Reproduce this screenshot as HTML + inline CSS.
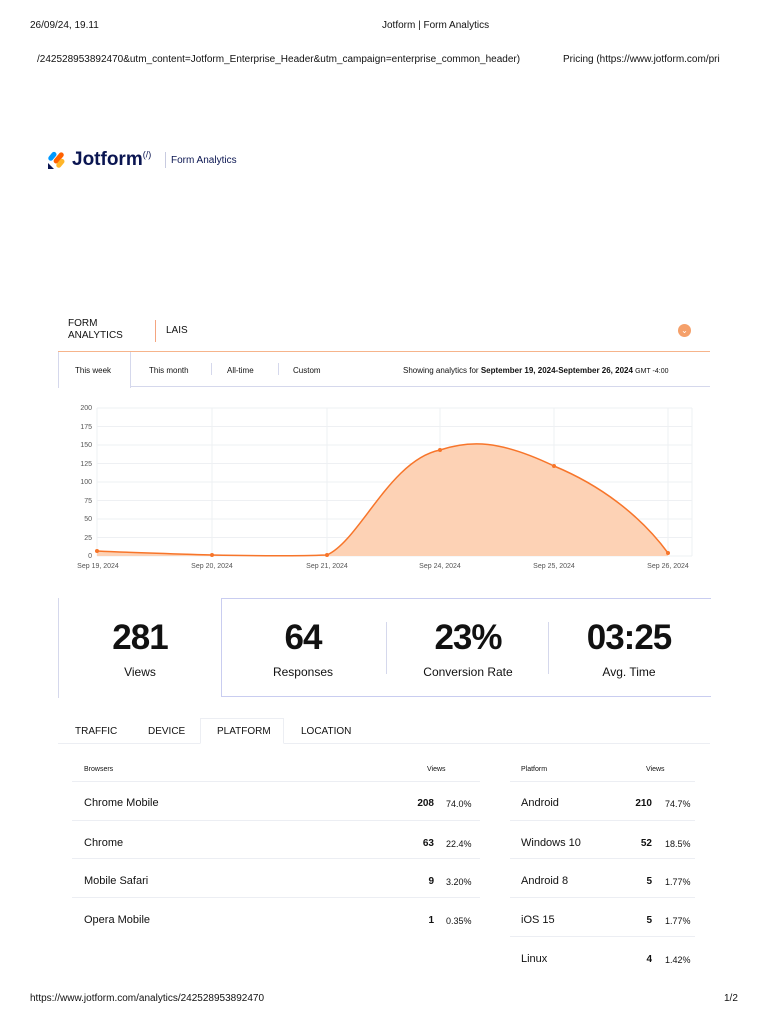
<!DOCTYPE html>
<html><head><meta charset="utf-8"><style>
*{margin:0;padding:0;box-sizing:border-box}
body{width:768px;height:1024px;background:#fff;font-family:"Liberation Sans",sans-serif;color:#111;position:relative;overflow:hidden}
.a{position:absolute;white-space:nowrap}
.s{font-size:10px}
.big{font-size:35px;font-weight:bold;letter-spacing:-1px;text-align:center;width:160px}
.lbl{font-size:12px;text-align:center;width:160px}
.row{position:absolute;border-top:1px solid #eceef3;height:1px}
</style></head><body>
<div class="a s" style="left:30px;top:20px">26/09/24, 19.11</div>
<div class="a s" style="left:382px;top:20px">Jotform | Form Analytics</div>
<div class="a s" style="left:37px;top:54px">/242528953892470&amp;utm_content=Jotform_Enterprise_Header&amp;utm_campaign=enterprise_common_header)</div>
<div class="a s" style="left:563px;top:54px">Pricing (https://www.jotform.com/pri</div>

<svg class="a" style="left:47px;top:150px" width="20" height="20" viewBox="0 0 20 20">
<rect x="3" y="1" width="5" height="10" rx="2.5" transform="rotate(40 5 6)" fill="#0099ff"/>
<rect x="9" y="1" width="5" height="13" rx="2.5" transform="rotate(40 11 8)" fill="#ff6100"/>
<rect x="11" y="8" width="5" height="10" rx="2.5" transform="rotate(40 13 13)" fill="#ffb629"/>
<path d="M1 13 L1 19 L7 19 Z" fill="#0a1551"/></svg>
<div class="a" style="left:72px;top:149px;font-size:19px;font-weight:bold;color:#0a1551">Jotform<sup style="font-size:9px;font-weight:normal">(/)</sup></div>
<div class="a" style="left:165px;top:152px;height:16px;border-left:1px solid #c8cbe0"></div>
<div class="a" style="left:171px;top:155px;font-size:10px;color:#0a1551">Form Analytics</div>

<div class="a" style="left:68px;top:318px;font-size:10px;line-height:12px">FORM<br>ANALYTICS</div>
<div class="a" style="left:155px;top:320px;height:22px;border-left:1px solid #f4a580"></div>
<div class="a" style="left:166px;top:325px;font-size:10px">LAIS</div>
<div class="a" style="left:678px;top:324px;width:13px;height:13px;border-radius:50%;background:#f5a06a;color:#fff;font-size:8px;text-align:center;line-height:13px">⌄</div>
<div class="a" style="left:58px;top:351px;width:652px;border-top:1px solid #f6b48b"></div>
<div class="a" style="left:58px;top:352px;width:652px;height:35px;border-bottom:1px solid #d5d8ec"></div>
<div class="a" style="left:58px;top:352px;width:73px;height:36px;background:#fff;border-right:1px solid #d5d8ec;border-left:1px solid #d5d8ec"></div>
<div class="a" style="left:75px;top:366px;font-size:8px">This week</div>
<div class="a" style="left:149px;top:366px;font-size:8px">This month</div>
<div class="a" style="left:211px;top:363px;height:12px;border-left:1px solid #d5d8ec"></div>
<div class="a" style="left:227px;top:366px;font-size:8px">All-time</div>
<div class="a" style="left:278px;top:363px;height:12px;border-left:1px solid #d5d8ec"></div>
<div class="a" style="left:293px;top:366px;font-size:8px">Custom</div>
<div class="a" style="left:403px;top:366px;font-size:8px">Showing analytics for <b>September 19, 2024-September 26, 2024</b> <span style="font-size:7px">GMT -4:00</span></div>

<svg class="a" style="left:60px;top:400px" width="650" height="175">
<g stroke="#eef0f3" stroke-width="1">
<line x1="37" y1="8" x2="632" y2="8"/><line x1="37" y1="26.5" x2="632" y2="26.5"/><line x1="37" y1="45" x2="632" y2="45"/><line x1="37" y1="63.5" x2="632" y2="63.5"/><line x1="37" y1="82" x2="632" y2="82"/><line x1="37" y1="100.5" x2="632" y2="100.5"/><line x1="37" y1="119" x2="632" y2="119"/><line x1="37" y1="137.5" x2="632" y2="137.5"/><line x1="37" y1="156" x2="632" y2="156"/>
<line x1="37" y1="8" x2="37" y2="156"/><line x1="152" y1="8" x2="152" y2="156"/><line x1="267" y1="8" x2="267" y2="156"/><line x1="380" y1="8" x2="380" y2="156"/><line x1="494" y1="8" x2="494" y2="156"/><line x1="608" y1="8" x2="608" y2="156"/><line x1="632" y1="8" x2="632" y2="156"/>
</g>
<g font-size="7" fill="#555" text-anchor="end" font-family="Liberation Sans">
<text x="32" y="10">200</text><text x="32" y="29">175</text><text x="32" y="47">150</text><text x="32" y="66">125</text><text x="32" y="84">100</text><text x="32" y="103">75</text><text x="32" y="121">50</text><text x="32" y="140">25</text><text x="32" y="158">0</text></g>
<g font-size="7" fill="#555" text-anchor="middle" font-family="Liberation Sans">
<text x="38" y="168">Sep 19, 2024</text><text x="152" y="168">Sep 20, 2024</text><text x="267" y="168">Sep 21, 2024</text><text x="380" y="168">Sep 24, 2024</text><text x="494" y="168">Sep 25, 2024</text><text x="608" y="168">Sep 26, 2024</text></g>
<path d="M37 151 C80 153 120 154 152 155 C200 156 240 156 267 155 C300 140 330 60 380 50 C410 40 440 40 494 66 C540 85 580 115 608 153 L608 156 L37 156 Z" fill="#fdd2b5"/>
<path d="M37 151 C80 153 120 154 152 155 C200 156 240 156 267 155 C300 140 330 60 380 50 C410 40 440 40 494 66 C540 85 580 115 608 153" fill="none" stroke="#f7752a" stroke-width="1.5"/>
<g fill="#f7752a"><circle cx="37" cy="151" r="2"/><circle cx="152" cy="155" r="2"/><circle cx="267" cy="155" r="2"/><circle cx="380" cy="50" r="2"/><circle cx="494" cy="66" r="2"/><circle cx="608" cy="153" r="2"/></g>
</svg>

<div class="a" style="left:58px;top:598px;height:100px;border-left:1px solid #d5d8ec"></div>
<div class="a" style="left:221px;top:598px;width:490px;height:99px;border:1px solid #c9cdf0;border-right:none"></div>
<div class="a big" style="left:60px;top:618px">281</div><div class="a lbl" style="left:60px;top:665px">Views</div>
<div class="a big" style="left:223px;top:618px">64</div><div class="a lbl" style="left:223px;top:665px">Responses</div>
<div class="a" style="left:386px;top:622px;height:52px;border-left:1px solid #d5d8ec"></div>
<div class="a big" style="left:388px;top:618px">23%</div><div class="a lbl" style="left:388px;top:665px">Conversion Rate</div>
<div class="a" style="left:548px;top:622px;height:52px;border-left:1px solid #d5d8ec"></div>
<div class="a big" style="left:549px;top:618px">03:25</div><div class="a lbl" style="left:549px;top:665px">Avg. Time</div>

<div class="a" style="left:58px;top:743px;width:652px;border-top:1px solid #eceef3"></div>
<div class="a" style="left:200px;top:718px;width:84px;height:26px;border:1px solid #eceef3;border-bottom:1px solid #fff;background:#fff"></div>
<div class="a" style="left:75px;top:726px;font-size:10px">TRAFFIC</div>
<div class="a" style="left:148px;top:726px;font-size:10px">DEVICE</div>
<div class="a" style="left:217px;top:726px;font-size:10px">PLATFORM</div>
<div class="a" style="left:301px;top:726px;font-size:10px">LOCATION</div>

<div class="a" style="left:84px;top:766px;font-size:7px">Browsers</div>
<div class="a" style="left:427px;top:766px;font-size:7px">Views</div>
<div class="a" style="left:521px;top:766px;font-size:7px">Platform</div>
<div class="a" style="left:646px;top:766px;font-size:7px">Views</div>
<div class="row" style="left:72px;top:781px;width:408px"></div><div class="row" style="left:72px;top:820px;width:408px"></div><div class="row" style="left:72px;top:858px;width:408px"></div><div class="row" style="left:72px;top:897px;width:408px"></div>
<div class="row" style="left:510px;top:781px;width:185px"></div><div class="row" style="left:510px;top:820px;width:185px"></div><div class="row" style="left:510px;top:858px;width:185px"></div><div class="row" style="left:510px;top:897px;width:185px"></div><div class="row" style="left:510px;top:936px;width:185px"></div>

<div class="a" style="left:84px;top:797px;font-size:11px">Chrome Mobile</div><div class="a" style="left:390px;width:44px;text-align:right;top:798px;font-size:10px;font-weight:bold">208</div><div class="a" style="left:446px;top:799px;font-size:9px">74.0%</div>
<div class="a" style="left:84px;top:837px;font-size:11px">Chrome</div><div class="a" style="left:390px;width:44px;text-align:right;top:838px;font-size:10px;font-weight:bold">63</div><div class="a" style="left:446px;top:839px;font-size:9px">22.4%</div>
<div class="a" style="left:84px;top:875px;font-size:11px">Mobile Safari</div><div class="a" style="left:390px;width:44px;text-align:right;top:876px;font-size:10px;font-weight:bold">9</div><div class="a" style="left:446px;top:877px;font-size:9px">3.20%</div>
<div class="a" style="left:84px;top:914px;font-size:11px">Opera Mobile</div><div class="a" style="left:390px;width:44px;text-align:right;top:915px;font-size:10px;font-weight:bold">1</div><div class="a" style="left:446px;top:916px;font-size:9px">0.35%</div>

<div class="a" style="left:521px;top:797px;font-size:11px">Android</div><div class="a" style="left:610px;width:42px;text-align:right;top:798px;font-size:10px;font-weight:bold">210</div><div class="a" style="left:665px;top:799px;font-size:9px">74.7%</div>
<div class="a" style="left:521px;top:837px;font-size:11px">Windows 10</div><div class="a" style="left:610px;width:42px;text-align:right;top:838px;font-size:10px;font-weight:bold">52</div><div class="a" style="left:665px;top:839px;font-size:9px">18.5%</div>
<div class="a" style="left:521px;top:875px;font-size:11px">Android 8</div><div class="a" style="left:610px;width:42px;text-align:right;top:876px;font-size:10px;font-weight:bold">5</div><div class="a" style="left:665px;top:877px;font-size:9px">1.77%</div>
<div class="a" style="left:521px;top:914px;font-size:11px">iOS 15</div><div class="a" style="left:610px;width:42px;text-align:right;top:915px;font-size:10px;font-weight:bold">5</div><div class="a" style="left:665px;top:916px;font-size:9px">1.77%</div>
<div class="a" style="left:521px;top:953px;font-size:11px">Linux</div><div class="a" style="left:610px;width:42px;text-align:right;top:954px;font-size:10px;font-weight:bold">4</div><div class="a" style="left:665px;top:955px;font-size:9px">1.42%</div>

<div class="a s" style="left:30px;top:993px">https://www.jotform.com/analytics/242528953892470</div>
<div class="a s" style="left:724px;top:993px">1/2</div>
</body></html>
